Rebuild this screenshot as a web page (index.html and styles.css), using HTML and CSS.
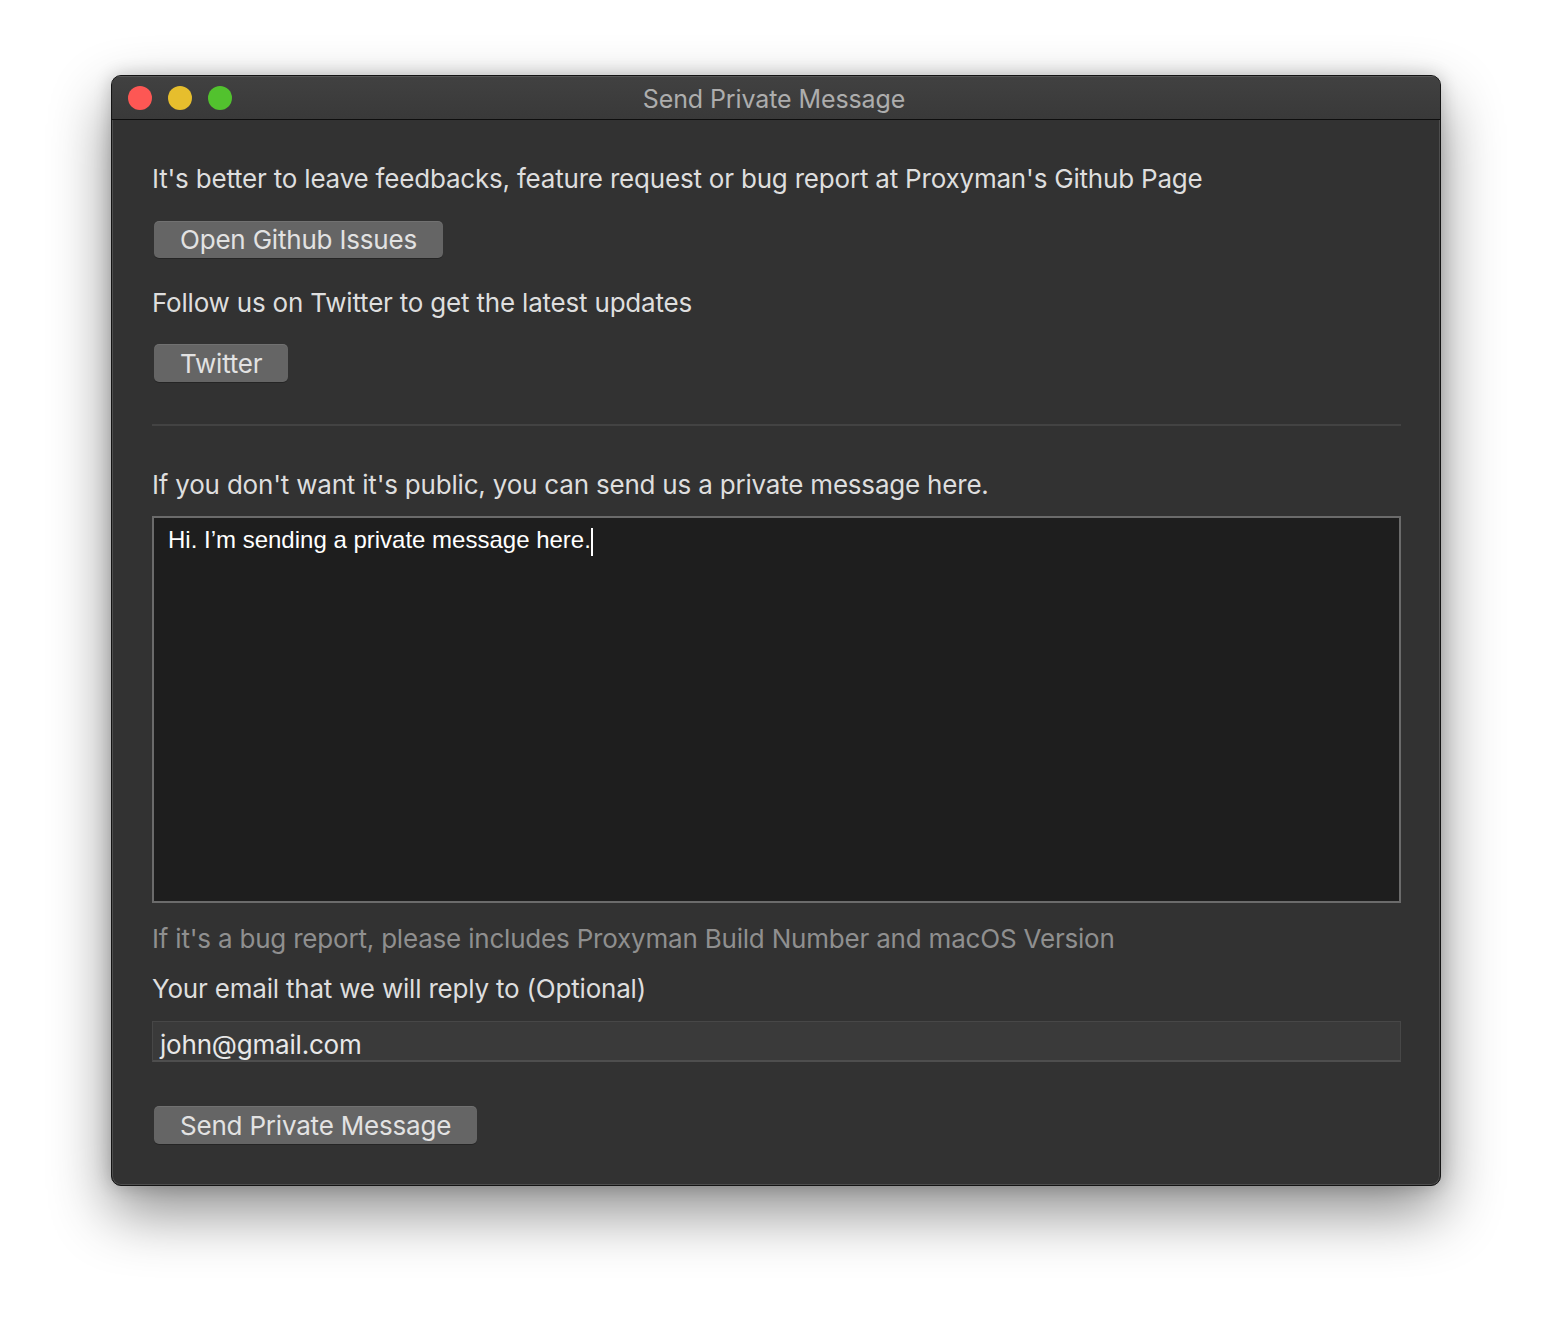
FILE: index.html
```html
<!DOCTYPE html>
<html lang="en">
<head>
<meta charset="utf-8">
<title>Send Private Message</title>
<link rel="stylesheet" href="styles.css">
</head>
<body>
<div class="window">
  <div class="titlebar">
    <div class="lights">
      <span class="light red"></span>
      <span class="light yellow"></span>
      <span class="light green"></span>
    </div>
    <div class="title">Send Private Message</div>
  </div>
  <div class="content">
    <p class="label first">It's better to leave feedbacks, feature request or bug report at Proxyman's Github Page</p>
    <button class="btn btn-github">Open Github Issues</button>
    <p class="label follow">Follow us on Twitter to get the latest updates</p>
    <button class="btn btn-twitter">Twitter</button>
    <hr class="sep">
    <p class="label private">If you don't want it's public, you can send us a private message here.</p>
    <div class="textarea"><span class="msg">Hi. I’m sending a private message here.</span><span class="caret"></span></div>
    <p class="label hint">If it's a bug report, please includes Proxyman Build Number and macOS Version</p>
    <p class="label email-label">Your email that we will reply to (Optional)</p>
    <div class="email">john@gmail.com</div>
    <button class="btn btn-send">Send Private Message</button>
  </div>
</div>
</body>
</html>
```
FILE: styles.css
```css
html, body {
  margin: 0;
  padding: 0;
  background: #ffffff;
}
body {
  padding: 75px 0 150px 111px;
  min-height: 1334px;
  box-sizing: border-box;
  font-family: "Inter", "Open Sans", sans-serif;
}
.window {
  width: 1328px;
  border: 1px solid #141414;
  border-radius: 10px;
  background: #323232;
  box-shadow: inset 0 0 0 1px rgba(255,255,255,0.14), 0 26px 60px rgba(0,0,0,0.45), 0 0 18px rgba(0,0,0,0.2);
  overflow: hidden;
}
.titlebar {
  position: relative;
  height: 43px;
  border-bottom: 1px solid #0e0e0e;
  background: linear-gradient(#414141, #393939);
  box-shadow: inset 0 1px 0 rgba(255,255,255,0.12);
  display: flex;
  align-items: center;
  justify-content: center;
}
.lights {
  position: absolute;
  left: 16px;
  top: 10px;
  display: flex;
  gap: 16px;
}
.light {
  width: 24px;
  height: 24px;
  border-radius: 50%;
  display: block;
}
.red { background: #fd5754; }
.yellow { background: #e6be2d; }
.green { background: #52c22e; }
.title {
  font-size: 25px;
  color: #adadad;
  letter-spacing: -0.1px;
  padding-top: 2px;
  margin-right: 4px;
}
.content {
  padding: 43px 39px 41px 40px;
  display: flex;
  flex-direction: column;
  align-items: flex-start;
}
.label {
  margin: 0;
  font-size: 26px;
  line-height: 32px;
  color: #dedede;
  letter-spacing: -0.2px;
}
.btn {
  font-family: inherit;
  font-size: 26px;
  color: #e2e2e2;
  background: #656565;
  border: none;
  border-radius: 5px;
  box-shadow: 0 1px 0 rgba(0,0,0,0.25), inset 0 1px 0 rgba(255,255,255,0.08);
  margin-left: 2px;
  padding: 0 26px;
  line-height: 37px;
  height: 37px;
  letter-spacing: -0.2px;
}
.btn-github { margin-top: 26px; }
.follow { margin-top: 29px; }
.btn-twitter { margin-top: 25px; height: 38px; }
.sep {
  align-self: stretch;
  border: none;
  height: 2px;
  background: #434343;
  margin: 42px 0 0 0;
}
.private { margin-top: 43px; }
.textarea {
  align-self: stretch;
  margin-top: 15px;
  height: 383px;
  border: 2px solid #6b6b6b;
  background: #1e1e1e;
  padding: 0 14px;
  display: flex;
  align-items: flex-start;
}
.msg {
  font-family: "Liberation Sans", Arial, sans-serif;
  font-size: 24px;
  line-height: 44px;
  color: #ffffff;
}
.caret {
  display: block;
  width: 2px;
  height: 28px;
  margin-top: 10px;
  background: #ffffff;
}
.hint {
  margin-top: 20px;
  color: #8f8f8f;
}
.email-label { margin-top: 18px; }
.email {
  align-self: stretch;
  margin-top: 16px;
  height: 38px;
  border: 1px solid #474747;
  border-bottom: 2px solid #4e4e4e;
  background: #3a3a3a;
  font-size: 26px;
  line-height: 46px;
  color: #e8e8e8;
  padding: 0 7px;
  box-sizing: content-box;
  letter-spacing: -0.2px;
  overflow: hidden;
}
.btn-send { margin-top: 44px; height: 38px; }
```
